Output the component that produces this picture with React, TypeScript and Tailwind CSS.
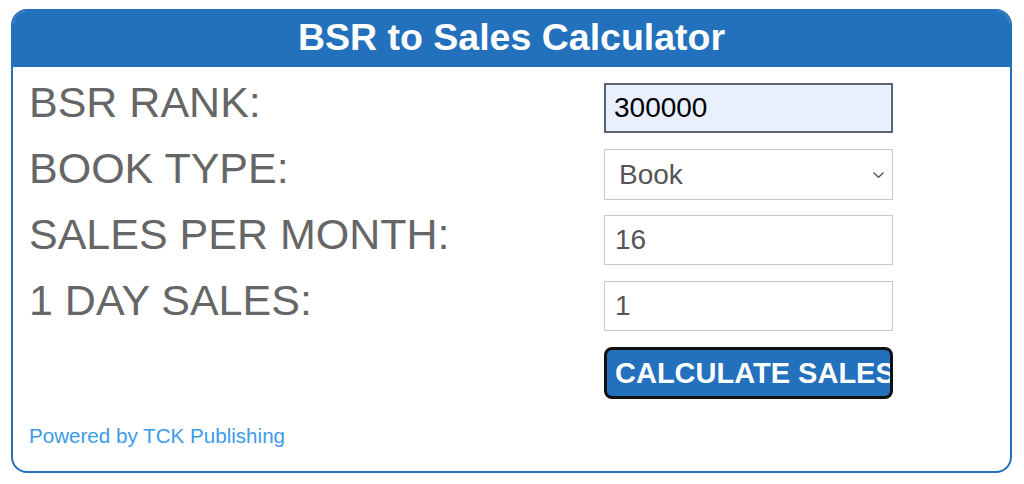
import React from 'react';

const font = { fontFamily: '"Liberation Sans", Arial, sans-serif' };

function FieldRow({ label, children }: { label: string; children: React.ReactNode }) {
  return (
    <div className="flex items-start h-[50px]">
      <div className="w-[575px] text-[43px] leading-none text-[#666] -mt-[2px]">{label}</div>
      <div className="w-[289px]">{children}</div>
    </div>
  );
}

export default function App() {
  return (
    <div className="w-[1024px] h-[484px] bg-white pt-[9px] pl-[11px]" style={font}>
      <div className="w-[1001px] h-[464px] border-2 border-[#2370bd] rounded-[16px] overflow-hidden flex flex-col">
        {/* Header */}
        <div className="h-[56px] bg-[#2370bd] flex items-center justify-center">
          <h1 className="text-[37.5px] font-bold text-white leading-none -mt-[3px]">BSR to Sales Calculator</h1>
        </div>

        {/* Form */}
        <div className="pt-[16px] pl-[16px] flex flex-col gap-[16px]">
          <FieldRow label="BSR RANK:">
            <input
              readOnly
              value="300000"
              className="w-[289px] h-[50px] bg-[#e8f0fe] border-2 border-[#5b6572] px-[8px] text-[28px] text-black outline-none"
            />
          </FieldRow>
          <FieldRow label="BOOK TYPE:">
            <div className="relative w-[289px] h-[51px] border border-[#c8c8c8] bg-white flex items-center pl-[14px] text-[28px] text-[#555]">
              Book
              <svg className="absolute right-[7px] top-[21px]" width="13" height="8" viewBox="0 0 13 8" fill="none">
                <path d="M1.5 1.5 L6.5 6.3 L11.5 1.5" stroke="#555" strokeWidth="1.3" />
              </svg>
            </div>
          </FieldRow>
          <FieldRow label="SALES PER MONTH:">
            <input
              readOnly
              value="16"
              className="w-[289px] h-[50px] bg-white border border-[#c8c8c8] px-[10px] text-[28px] text-[#555] outline-none"
            />
          </FieldRow>
          <FieldRow label="1 DAY SALES:">
            <input
              readOnly
              value="1"
              className="w-[289px] h-[50px] bg-white border border-[#c8c8c8] px-[10px] text-[28px] text-[#555] outline-none"
            />
          </FieldRow>
          <div className="flex h-[52px]">
            <div className="w-[575px]" />
            <button className="w-[289px] h-[52px] bg-[#2370bd] border-[3px] border-[#111] rounded-[8px] overflow-hidden whitespace-nowrap text-left pl-[8px] text-[29px] font-bold text-white leading-none">
              CALCULATE SALES
            </button>
          </div>
        </div>

        <div className="pl-[16px] mt-[22px] text-[20.6px] text-[#3d9be9]">Powered by TCK Publishing</div>
      </div>
    </div>
  );
}
